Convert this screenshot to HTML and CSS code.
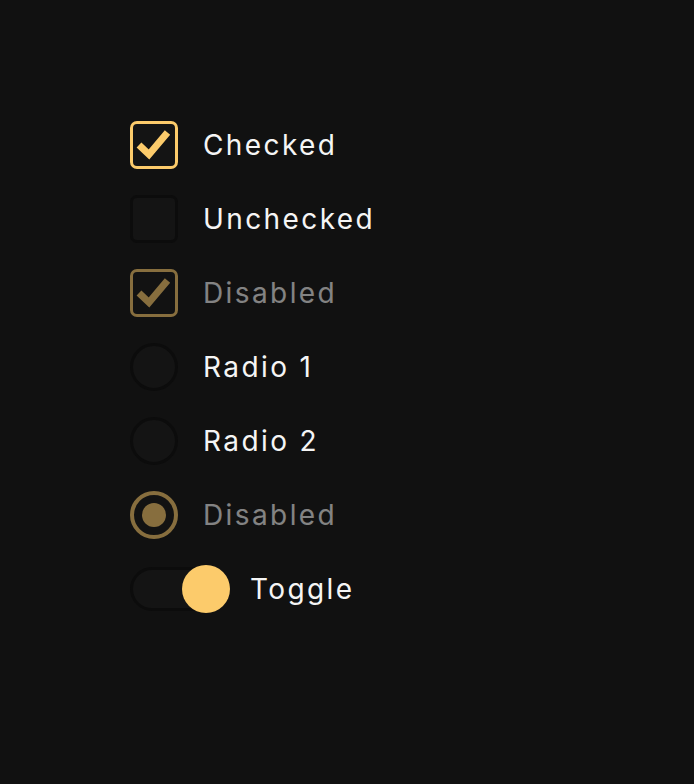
FILE: index.html
```html
<!DOCTYPE html>
<html lang="en">
<head>
<meta charset="utf-8">
<title>Controls</title>
<link rel="stylesheet" href="styles.css">
</head>
<body>
<main class="list">
  <label class="item">
    <span class="box checked">
      <svg viewBox="0 0 42 42" width="42" height="42"><path d="M6 21 L16 30.5 L34.5 8.5" fill="none" stroke="#fccb6b" stroke-width="7" stroke-linecap="butt" stroke-linejoin="miter"/></svg>
    </span>
    <span class="label">Checked</span>
  </label>
  <label class="item">
    <span class="box"></span>
    <span class="label">Unchecked</span>
  </label>
  <label class="item disabled">
    <span class="box checked">
      <svg viewBox="0 0 42 42" width="42" height="42"><path d="M6 21 L16 30.5 L34.5 8.5" fill="none" stroke="#fccb6b" stroke-width="7" stroke-linecap="butt" stroke-linejoin="miter"/></svg>
    </span>
    <span class="label">Disabled</span>
  </label>
  <label class="item">
    <span class="radio"></span>
    <span class="label">Radio 1</span>
  </label>
  <label class="item">
    <span class="radio"></span>
    <span class="label">Radio 2</span>
  </label>
  <label class="item disabled">
    <span class="radio selected"><span class="dot"></span></span>
    <span class="label">Disabled</span>
  </label>
  <label class="item toggle-item">
    <span class="track"><span class="knob"></span></span>
    <span class="label">Toggle</span>
  </label>
</main>
</body>
</html>
```
FILE: styles.css
```css
html, body {
  margin: 0;
  padding: 0;
  background: #111111;
}
body {
  width: 694px;
  height: 784px;
  font-family: Inter, "Open Sans", sans-serif;
  color: #f5f5f5;
}
.list {
  display: flex;
  flex-direction: column;
  gap: 26px;
  padding: 121px 0 0 130px;
}
.item {
  display: flex;
  align-items: center;
  gap: 25px;
  height: 48px;
}
.label {
  font-size: 28px;
  letter-spacing: 2.4px;
  font-weight: 380;
  line-height: 48px;
}
.box {
  box-sizing: border-box;
  width: 48px;
  height: 48px;
  border-radius: 7px;
  border: 3px solid #0c0c0c;
  background: #141414;
  display: flex;
  align-items: center;
  justify-content: center;
}
.box.checked {
  border-color: #fccb6b;
  background: #141414;
}
.radio {
  box-sizing: border-box;
  width: 48px;
  height: 48px;
  border-radius: 50%;
  border: 3px solid #0c0c0c;
  background: #141414;
  display: flex;
  align-items: center;
  justify-content: center;
}
.radio.selected {
  border: 4px solid #fccb6b;
}
.dot {
  width: 24px;
  height: 24px;
  border-radius: 50%;
  background: #fccb6b;
}
.disabled .box,
.disabled .radio,
.disabled .label {
  opacity: 0.5;
}
.toggle-item {
  gap: 20px;
}
.track {
  position: relative;
  box-sizing: border-box;
  width: 100px;
  height: 44px;
  border-radius: 22px;
  border: 3px solid #0c0c0c;
  background: #141414;
}
.knob {
  position: absolute;
  right: -3px;
  top: 50%;
  transform: translateY(-50%);
  width: 48px;
  height: 48px;
  border-radius: 50%;
  background: #fccb6b;
}
```
